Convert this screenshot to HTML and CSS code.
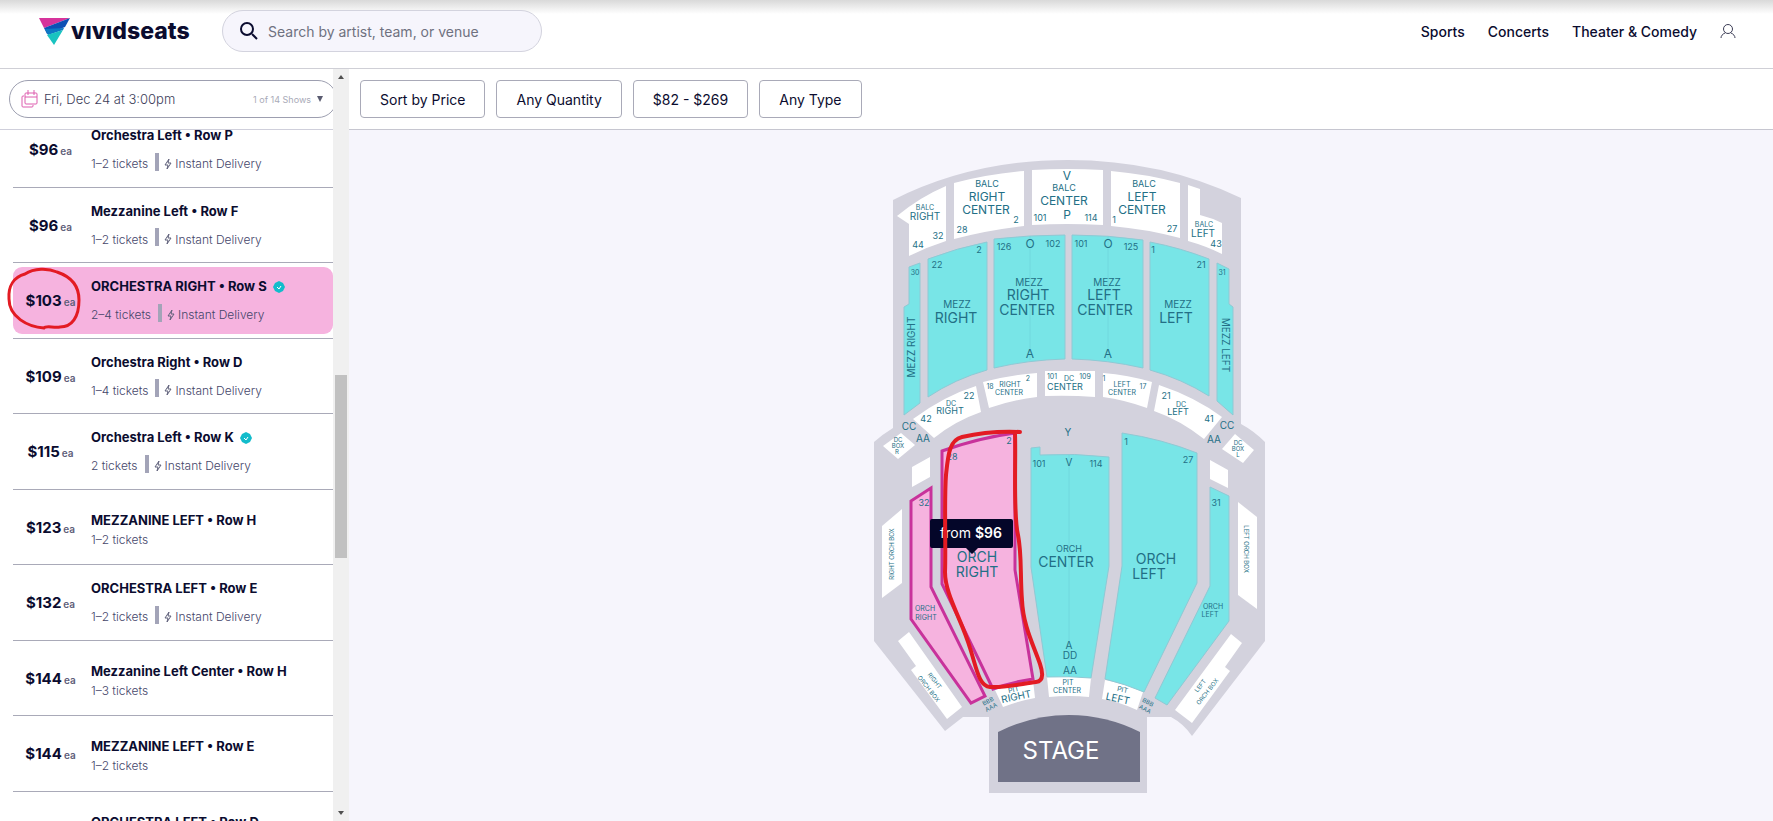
FILE: index.html
```html
<!DOCTYPE html>
<html lang="en">

<head>
    <meta charset="UTF-8">
    <meta name="viewport" content="width=device-width, initial-scale=1">
    <title>Fri, Dec 24 at 3:00pm - Vivid Seats</title>
    <link rel="stylesheet" href="styles.css">
</head>

<body>

    <!-- Header -->
    <header class="header">
        <a href="#" class="logo">
            <svg width="31" height="27" viewBox="0 0 31 27" aria-hidden="true">
                <path d="M0 0H31L5 10Z" fill="#d6339b" />
                <path d="M31 0L5 10L8 16L26 9Z" fill="#0d50b5" />
                <path d="M6 11L25 10L24 12L9 17Z" fill="#0d78c4" />
                <path d="M8 17L24 12L15 27Z" fill="#19c3c0" />
            </svg>
            <span>vıvıdseats</span>
        </a>
        <label class="search">
            <svg width="18" height="18" viewBox="0 0 18 18" aria-hidden="true">
                <circle cx="7" cy="7" r="6" />
                <path d="M12 12l5 5" />
            </svg>
            <input type="search" placeholder="Search by artist, team, or venue" aria-label="Search">
        </label>
        <nav class="nav">
            <a href="#">Sports</a>
            <a href="#">Concerts</a>
            <a href="#">Theater &amp; Comedy</a>
            <a href="#" class="account" aria-label="Account">
                <svg width="16" height="16" viewBox="0 0 16 16" aria-hidden="true">
                    <circle cx="8" cy="6" r="4.500" />
                    <path d="M1 15c0-2 1.500-4 4-5M15 15c0-2-1.500-4-4-5" />
                </svg>
            </a>
        </nav>
    </header>

    <main class="main">

        <!-- Ticket List -->
        <aside class="sidebar">
            <div class="listing">
                <div class="date-bar">
                    <button class="date-picker">
                        <svg width="17" height="18" viewBox="0 0 17 18" aria-hidden="true">
                            <rect x="4" y="3" width="12" height="11" rx="1" />
                            <path d="M4 7H16M7 0V5M13 0V5M3 6H2Q1 6 1 7V16Q1 17 2 17H11Q12 17 12 16V15" />
                        </svg>
                        <span>Fri, Dec 24 at 3:00pm</span>
                        <span class="shows">1 of 14 Shows</span>
                        <span class="caret"></span>
                    </button>
                </div>
                <div class="tickets-window">
                    <ul id="tickets" class="tickets"></ul>
                </div>
            </div>
            <div class="scrollbar">
                <span class="arrow-up"></span>
                <div class="track"><div class="thumb"></div></div>
                <span class="arrow-down"></span>
            </div>
        </aside>

        <!-- Filters and Seat Map -->
        <section class="content">
            <div class="filters">
                <button>Sort by Price</button>
                <button>Any Quantity</button>
                <button>$82 - $269</button>
                <button>Any Type</button>
            </div>
            <div class="map">
                <svg width="430" height="651" viewBox="-14 0 430 651" role="img" aria-label="Seat map">
                    <path class="venue" d="M33 50Q112 10 208 10Q302 10 381 48V274Q394 281 405 292V491L332 586Q324 574 311 567H287V643H129V567H103L85 581L14 491V292Q23 284 33 278Z" />

                    <!-- Balcony -->
                    <g class="closed">
                        <path d="M37 66Q60 47 86 36V91Q67 97 49 106V74Z" />
                        <path d="M94 33Q128 24 164 21V76Q128 80 94 89Z" />
                        <path d="M172 20Q207 18 243 20V75Q207 73 172 75Z" />
                        <path d="M251 21Q286 24 320 33V88Q286 79 251 76Z" />
                        <path d="M328 35L340 39V65Q352 68 362 73V104Q346 96 328 91Z" />
                    </g>

                    <!-- Mezzanine -->
                    <g class="open">
                        <path d="M49 117L60 113V253L44 265V157L49 154Z" />
                        <path d="M68 109Q97 98 127 92V220Q95 229 68 247Z" />
                        <path d="M134 89Q170 85 205 85V209Q168 210 134 218Z" />
                        <path d="M212 85Q248 85 283 90V218Q248 210 212 209Z" />
                        <path d="M290 92Q321 98 349 109V246Q322 229 290 220Z" />
                        <path d="M357 113L369 119V154L373 157V265L357 251Z" />
                    </g>

                    <!-- Dress Circle and boxes -->
                    <g class="closed">
                        <path d="M53 269Q84 246 116 236L121 262Q95 271 74 288Z" />
                        <path d="M123 232Q150 225 177 223V247Q152 250 129 258Z" />
                        <path d="M185 221H235V247Q210 245 185 246Z" />
                        <path d="M243 223Q268 225 292 232L287 258Q265 250 243 247Z" />
                        <path d="M299 235Q335 247 362 267L344 289Q320 270 294 261Z" />
                        <path d="M23 296L41 283L55 295L38 309Z" />
                        <path d="M362 299L375 284L394 300L383 313Z" />
                        <path d="M52 317L70 307V327L52 337Z" />
                        <path d="M350 310L368 320V338L350 329Z" />
                        <path d="M22 376L42 359V433L22 448Z" />
                        <path d="M378 352L397 367V459L378 445Z" />
                        <path d="M49 482L38 491L56 516L51 520L87 569L102 557Z" />
                        <path d="M371 484L382 493L365 517L370 521L332 573L315 560Z" />
                        <path d="M135 540Q155 534 173 530L175 548Q158 551 143 557Z" />
                        <path d="M187 527Q209 525 231 528L229 547Q209 545 189 547Z" />
                        <path d="M245 530Q265 534 283 542L277 560Q260 552 242 549Z" />
                    </g>

                    <!-- Orchestra -->
                    <g class="open">
                        <path d="M171 298L180 297V305Q215 303 249 307V416L231 528Q209 526 187 527L171 417Z" />
                        <path d="M262 283Q302 289 337 303V433L284 542Q265 534 245 529L262 416Z" />
                        <path d="M350 337L369 346V471L307 555L295 548L350 436Z" />
                    </g>
                    <g class="selected">
                        <path d="M51 351L71 338V437L125 546L111 553L51 469Z" />
                        <path d="M82 301Q118 288 155 283V420L173 529Q152 532 133 539L82 434Z" />
                    </g>
                    <path class="seam" d="M170 86V210M248 86V210M209 305V527" />

                    <!-- Section names -->
                    <g class="name-lg">
                        <text x="96" y="173">RIGHT</text>
                        <text x="168" y="150">RIGHT</text>
                        <text x="167" y="165">CENTER</text>
                        <text x="244" y="150">LEFT</text>
                        <text x="245" y="165">CENTER</text>
                        <text x="316" y="173">LEFT</text>
                        <text x="117" y="412">ORCH</text>
                        <text x="117" y="427">RIGHT</text>
                        <text x="206" y="417">CENTER</text>
                        <text x="296" y="414">ORCH</text>
                        <text x="289" y="429">LEFT</text>
                    </g>
                    <g class="name-md">
                        <text x="127" y="51">RIGHT</text>
                        <text x="126" y="64">CENTER</text>
                        <text x="204" y="55">CENTER</text>
                        <text x="282" y="51">LEFT</text>
                        <text x="282" y="64">CENTER</text>
                        <text x="207" y="30">V</text>
                        <text x="207" y="69">P</text>
                        <text x="170" y="98">O</text>
                        <text x="248" y="98">O</text>
                        <text x="170" y="208">A</text>
                        <text x="248" y="208">A</text>
                    </g>
                    <g class="name-sm">
                        <text x="65" y="70">RIGHT</text>
                        <text x="343" y="87">LEFT</text>
                        <text x="97" y="158">MEZZ</text>
                        <text x="169" y="136">MEZZ</text>
                        <text x="247" y="136">MEZZ</text>
                        <text x="318" y="158">MEZZ</text>
                        <text transform="translate(55 197) rotate(-90)">MEZZ RIGHT</text>
                        <text transform="translate(362 195) rotate(90)">MEZZ LEFT</text>
                        <text x="208" y="286">Y</text>
                        <text x="209" y="316">V</text>
                        <text x="209" y="499">A</text>
                        <text x="210" y="509">DD</text>
                        <text x="210" y="524">AA</text>
                        <text x="49" y="280">CC</text>
                        <text x="63" y="292">AA</text>
                        <text x="367" y="279">CC</text>
                        <text x="354" y="293">AA</text>
                        <text transform="translate(157 550) rotate(-12)">RIGHT</text>
                        <text transform="translate(257 552) rotate(12)">LEFT</text>
                    </g>
                    <g class="seat">
                        <text x="127" y="37">BALC</text>
                        <text x="204" y="41">BALC</text>
                        <text x="284" y="37">BALC</text>
                        <text x="58" y="98">44</text>
                        <text x="78" y="89">32</text>
                        <text x="102" y="83">28</text>
                        <text x="156" y="73">2</text>
                        <text x="180" y="71">101</text>
                        <text x="231" y="71">114</text>
                        <text x="254" y="73">1</text>
                        <text x="312" y="82">27</text>
                        <text x="356" y="97">43</text>
                        <text x="77" y="118">22</text>
                        <text x="119" y="103">2</text>
                        <text x="144" y="100">126</text>
                        <text x="193" y="97">102</text>
                        <text x="221" y="97">101</text>
                        <text x="271" y="100">125</text>
                        <text x="293" y="103">1</text>
                        <text x="341" y="118">21</text>
                        <text x="109" y="249">22</text>
                        <text x="66" y="272">42</text>
                        <text x="306" y="249">21</text>
                        <text x="349" y="272">41</text>
                        <text x="149" y="294">2</text>
                        <text x="92" y="310">28</text>
                        <text x="64" y="356">32</text>
                        <text x="179" y="317">101</text>
                        <text x="236" y="317">114</text>
                        <text x="266" y="295">1</text>
                        <text x="328" y="313">27</text>
                        <text x="356" y="356">31</text>
                        <text x="209" y="402">ORCH</text>
                        <text x="90" y="264">RIGHT</text>
                        <text x="205" y="240">CENTER</text>
                        <text x="318" y="265">LEFT</text>
                    </g>
                    <g class="seat-sm">
                        <text x="65" y="60">BALC</text>
                        <text x="344" y="77">BALC</text>
                        <text x="91" y="256">DC</text>
                        <text x="321" y="257">DC</text>
                        <text x="55" y="125">30</text>
                        <text x="362" y="125">31</text>
                        <text x="130" y="239">18</text>
                        <text x="168" y="231">2</text>
                        <text x="192" y="229">101</text>
                        <text x="225" y="229">109</text>
                        <text x="209" y="231">DC</text>
                        <text x="244" y="231">1</text>
                        <text x="283" y="239">17</text>
                        <text x="150" y="237">RIGHT</text>
                        <text x="149" y="245">CENTER</text>
                        <text x="262" y="237">LEFT</text>
                        <text x="262" y="245">CENTER</text>
                        <text x="65" y="461">ORCH</text>
                        <text x="66" y="470">RIGHT</text>
                        <text x="353" y="459">ORCH</text>
                        <text x="350" y="467">LEFT</text>
                        <text x="208" y="535">PIT</text>
                        <text x="207" y="543">CENTER</text>
                        <text transform="translate(154 542) rotate(-12)">PIT</text>
                        <text transform="translate(262 542) rotate(12)">PIT</text>
                    </g>
                    <g class="box-name">
                        <text transform="translate(34 404) rotate(-90)">RIGHT ORCH BOX</text>
                        <text transform="translate(384 399) rotate(90)">LEFT ORCH BOX</text>
                        <text transform="translate(73 532) rotate(52)">RIGHT</text>
                        <text transform="translate(67 540) rotate(52)">ORCH BOX</text>
                        <text transform="translate(342 537) rotate(-52)">LEFT</text>
                        <text transform="translate(349 543) rotate(-52)">ORCH BOX</text>
                        <text transform="translate(129 553) rotate(-28)">BBB</text>
                        <text transform="translate(132 559) rotate(-28)">AAA</text>
                        <text transform="translate(287 554) rotate(28)">BBB</text>
                        <text transform="translate(284 561) rotate(28)">AAA</text>
                        <text x="38" y="292">DC</text>
                        <text x="38" y="298">BOX</text>
                        <text x="37" y="304">R</text>
                        <text x="378" y="295">DC</text>
                        <text x="378" y="301">BOX</text>
                        <text x="378" y="307">L</text>
                    </g>

                    <!-- Stage -->
                    <path class="stage" d="M138 582Q172 565 209 565Q246 565 280 582V632H138Z" />
                    <text class="stage-name" x="201" y="609">STAGE</text>

                    <!-- Price tooltip -->
                    <path class="tip" d="M72 369H151Q153 369 153 371V396Q153 398 151 398H118L112 404L106 398H72Q70 398 70 396V371Q70 369 72 369Z" />
                    <text class="tip-text" x="111" y="388">from <tspan>$96</tspan></text>

                    <!-- Marker outline -->
                    <path class="marker" d="M160 282C138 281 115 284 102 287C89 290 88 306 86 325C84 350 86 395 85 422C85 445 102 470 110 498C117 520 119 536 130 537C145 538 165 533 176 532C185 531 182 520 180 514C173 494 163 475 162 450C160 425 162 405 158 385C153 365 156 310 155 284" />
                </svg>
            </div>
        </section>

    </main>

    <script>
        const tickets = [
            { price: 96, title: 'Orchestra Left • Row P', qty: '1–2 tickets', instant: true },
            { price: 96, title: 'Mezzanine Left • Row F', qty: '1–2 tickets', instant: true },
            { price: 103, title: 'ORCHESTRA RIGHT • Row S', qty: '2–4 tickets', instant: true, verified: true, active: true },
            { price: 109, title: 'Orchestra Right • Row D', qty: '1–4 tickets', instant: true },
            { price: 115, title: 'Orchestra Left • Row K', qty: '2 tickets', instant: true, verified: true },
            { price: 123, title: 'MEZZANINE LEFT • Row H', qty: '1–2 tickets' },
            { price: 132, title: 'ORCHESTRA LEFT • Row E', qty: '1–2 tickets', instant: true },
            { price: 144, title: 'Mezzanine Left Center • Row H', qty: '1–3 tickets' },
            { price: 144, title: 'MEZZANINE LEFT • Row E', qty: '1–2 tickets' },
            { price: 144, title: 'ORCHESTRA LEFT • Row D', qty: '1–2 tickets' }
        ];

        const verifiedIcon = `
            <svg class="verified" width="12" height="12" viewBox="0 0 12 12" aria-label="Verified">
                <path d="M6 0L8 1L10 2L11 4L12 6L11 8L10 10L8 11L6 12L4 11L2 10L1 8L0 6L1 4L2 2L4 1Z" fill="#12bccb" />
                <path d="M4 6L6 8L8 5" fill="none" stroke="#fff" />
            </svg>`;

        const boltIcon = `
            <svg class="bolt" width="8" height="12" viewBox="0 0 8 12" aria-hidden="true">
                <path d="M5 1L1 7H4L3 11L7 5H4Z" />
            </svg>`;

        const circle = `
            <svg class="circle" width="76" height="64" viewBox="0 0 76 64" aria-hidden="true">
                <path d="M19 7C28 1 42 1 51 5C66 10 73 20 73 33C73 50 66 60 54 60C47 61 40 58 38 61C22 60 3 50 3 32C2 19 8 10 19 7" />
            </svg>`;

        // Fill the list
        document.getElementById('tickets').innerHTML = tickets.map(t => `
            <li>
                <a href="#" class="ticket${t.active ? ' active' : ''}">
                    <span class="price">$${t.price}<small>ea</small></span>
                    <span class="info${t.instant ? ' instant' : ''}">
                        <span class="title">${t.title}${t.verified ? verifiedIcon : ''}</span>
                        <span class="details">${t.qty}${t.instant ? `<i class="bar"></i>${boltIcon}Instant Delivery` : ''}</span>
                    </span>
                    ${t.active ? circle : ''}
                </a>
            </li>`).join('');
    </script>

</body>

</html>
```

FILE: styles.css
```css
/* Global Styles */
* {
    box-sizing: border-box;
}

body {
    margin: 0;
    height: 100vh;
    display: flex;
    flex-direction: column;
    overflow: hidden;
    font-family: Inter, 'Liberation Sans', sans-serif;
    font-size: 14px;
    color: #0b0c2f;
    background: #fff;
}

a {
    color: inherit;
    text-decoration: none;
}

button,
input {
    font: inherit;
    color: inherit;
}

svg {
    flex: none;
}

/* Header */
.header {
    flex: none;
    height: 69px;
    display: flex;
    align-items: center;
    padding: 0 37px 6px 39px;
    border-bottom: 1px solid #cfcfd6;
    background: linear-gradient(#d9d9d9, #fff 14px);
}

.logo {
    display: flex;
    align-items: center;
    gap: 1px;
    width: 183px;
    font-size: 23px;
    font-weight: 800;
    line-height: 26px;
}

.search {
    display: flex;
    align-items: center;
    gap: 10px;
    width: 320px;
    height: 42px;
    padding: 0 17px;
    border: 1px solid #d3d3de;
    border-radius: 21px;
    background: #f6f5fc;
}

.search svg {
    fill: none;
    stroke: #0b0c2f;
    stroke-width: 2;
}

.search input {
    flex: 1;
    min-width: 0;
    padding: 0;
    border: 0;
    outline: 0;
    background: none;
}

.search input::placeholder {
    color: #6f7180;
    opacity: 1;
}

.nav {
    display: flex;
    align-items: center;
    gap: 23px;
    margin-left: auto;
    font-weight: 500;
}

.account {
    display: flex;
}

.account svg {
    fill: none;
    stroke: #3b3c55;
    stroke-width: 1;
}

/* Layout */
.main {
    flex: 1;
    min-height: 0;
    display: flex;
}

.sidebar {
    flex: none;
    display: flex;
    width: 349px;
}

.listing {
    flex: 1;
    min-width: 0;
    display: flex;
    flex-direction: column;
}

/* Date Picker */
.date-bar {
    flex: none;
    height: 61px;
    padding: 11px 0 0 9px;
    border-bottom: 1px solid #cfcfdb;
    overflow: hidden;
}

.date-picker {
    display: flex;
    align-items: center;
    width: 328px;
    height: 38px;
    padding: 0 13px 0 11px;
    border: 1px solid #9d9fb0;
    border-radius: 19px;
    background: #fff;
    color: #3c3d59;
    font-weight: 300;
    font-size: 13px;
    white-space: nowrap;
}

.date-picker svg {
    margin-right: 6px;
    fill: none;
    stroke: #dd5cae;
}

.shows {
    margin-left: auto;
    font-size: 9px;
    font-weight: 400;
    color: #a9aab8;
}

.caret {
    margin-left: 6px;
    border: 3px solid transparent;
    border-top: 6px solid #5a5b70;
    border-bottom: 0;
}

/* Tickets */
.tickets-window {
    flex: 1;
    min-height: 0;
    padding-left: 13px;
    overflow: hidden;
}

/* list is scrolled part way into its first row */
.tickets {
    list-style: none;
    margin: -18px 0 0;
    padding: 0;
}

.tickets li {
    height: 76px;
    padding: 4px 0;
    border-bottom: 1px solid #a9aab8;
}

.tickets li:nth-child(even) {
    height: 75px;
}

.ticket {
    position: relative;
    display: grid;
    grid-template-columns: 75px 1fr;
    column-gap: 3px;
    align-items: center;
    height: 100%;
    border-radius: 9px;
}

.ticket.active {
    background: #f6b3df;
}

.price {
    text-align: center;
    font-size: 15px;
    font-weight: 700;
}

.price small {
    margin-left: 2px;
    font-size: 10px;
    font-weight: 600;
    color: #5f607a;
}

.info {
    display: flex;
    flex-direction: column;
    padding-top: 5px;
    line-height: 19px;
    white-space: nowrap;
}

.info.instant {
    gap: 9px;
    padding-top: 0;
}

.title {
    display: flex;
    align-items: center;
    gap: 6px;
    font-size: 13px;
    font-weight: 700;
}

.details {
    display: flex;
    align-items: center;
    height: 19px;
    font-size: 12px;
    font-weight: 300;
    color: #45466a;
}

.bar {
    width: 4px;
    height: 18px;
    margin: 0 5px 4px 7px;
    background: #a3a4b8;
}

.bolt {
    margin-right: 3px;
    fill: none;
    stroke: #5f607a;
}

.circle {
    position: absolute;
    left: -7px;
    top: 0;
    fill: none;
    stroke: #e31b23;
    stroke-width: 3;
    stroke-linecap: round;
}

/* Scrollbar */
.scrollbar {
    display: flex;
    flex-direction: column;
    align-items: center;
    width: 16px;
    padding: 6px 0;
    background: #f0f0f0;
}

.track {
    flex: 1;
    display: flex;
    flex-direction: column;
    width: 12px;
    padding-top: 296px;
}

.thumb {
    height: 183px;
    background: #c1c1c1;
}

.arrow-up,
.arrow-down {
    border: 3px solid transparent;
}

.arrow-up {
    border-top: 0;
    border-bottom: 4px solid #505050;
}

.arrow-down {
    border-bottom: 0;
    border-top: 4px solid #505050;
}

/* Filters */
.content {
    flex: 1;
    min-width: 0;
    display: flex;
    flex-direction: column;
    background: #f6f5fc;
}

.filters {
    flex: none;
    display: flex;
    gap: 11px;
    height: 61px;
    padding: 11px 11px 0;
    border-bottom: 1px solid #c6c6d0;
    background: #fff;
}

.filters button {
    height: 38px;
    padding: 0 19px;
    border: 1px solid #a9aab8;
    border-radius: 4px;
    background: #fff;
}

/* Seat Map */
.map {
    flex: 1;
    min-height: 0;
    display: flex;
    align-items: center;
    justify-content: center;
}

.map text {
    text-anchor: middle;
    fill: #236f86;
}

.venue {
    fill: #d3d2dd;
}

.closed {
    fill: #fff;
}

.open {
    fill: #78e5e7;
    stroke: #8fc9d4;
    stroke-width: 1;
}

.selected {
    fill: #f6b3df;
    stroke: #c8329b;
    stroke-width: 3;
}

.seam {
    stroke: #70d8de;
}

.name-lg {
    font-size: 14px;
}

.name-md {
    font-size: 12px;
}

.name-sm {
    font-size: 10px;
}

.seat {
    font-size: 9px;
}

.seat-sm {
    font-size: 7px;
}

.box-name {
    font-size: 6px;
}

.stage {
    fill: #707287;
}

.map .stage-name {
    font-size: 24px;
    fill: #fff;
}

.tip {
    fill: #040629;
}

.map .tip-text {
    font-size: 14px;
    fill: #fff;
}

.tip-text tspan {
    font-weight: 600;
}

.marker {
    fill: none;
    stroke: #e31b23;
    stroke-width: 4;
    stroke-linecap: round;
}
```
